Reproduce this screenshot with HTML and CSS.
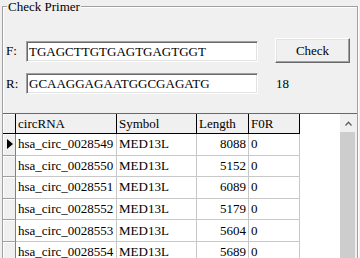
FILE: index.html
```html
<!DOCTYPE html>
<html>
<head>
<meta charset="utf-8">
<link rel="stylesheet" href="styles.css">
</head>
<body>
<fieldset class="group">
  <legend class="group-title">Check Primer</legend>
  <div class="form">
    <div class="row row-f">
      <label class="lbl">F:</label>
      <input class="seq seq-f" value="TGAGCTTGTGAGTGAGTGGT">
      <button class="btn">Check</button>
    </div>
    <div class="row row-r">
      <label class="lbl">R:</label>
      <input class="seq" value="GCAAGGAGAATGGCGAGATG">
      <span class="count">18</span>
    </div>
  </div>
  <div class="grid">
    <div class="grid-body">
      <div class="grow head">
        <div class="ind"></div>
        <div class="c c1">circRNA</div>
        <div class="c c2">Symbol</div>
        <div class="c c3 lft">Length</div>
        <div class="c c4">F0R</div>
      </div>
      <div class="grow">
        <div class="ind"><svg class="cur" width="6" height="10" viewBox="0 0 6 10"><polygon points="0,0 6,5 0,10" fill="#000"/></svg></div>
        <div class="c c1">hsa_circ_0028549</div>
        <div class="c c2">MED13L</div>
        <div class="c c3">8088</div>
        <div class="c c4">0</div>
      </div>
      <div class="grow">
        <div class="ind"></div>
        <div class="c c1">hsa_circ_0028550</div>
        <div class="c c2">MED13L</div>
        <div class="c c3">5152</div>
        <div class="c c4">0</div>
      </div>
      <div class="grow">
        <div class="ind"></div>
        <div class="c c1">hsa_circ_0028551</div>
        <div class="c c2">MED13L</div>
        <div class="c c3">6089</div>
        <div class="c c4">0</div>
      </div>
      <div class="grow">
        <div class="ind"></div>
        <div class="c c1">hsa_circ_0028552</div>
        <div class="c c2">MED13L</div>
        <div class="c c3">5179</div>
        <div class="c c4">0</div>
      </div>
      <div class="grow">
        <div class="ind"></div>
        <div class="c c1">hsa_circ_0028553</div>
        <div class="c c2">MED13L</div>
        <div class="c c3">5604</div>
        <div class="c c4">0</div>
      </div>
      <div class="grow">
        <div class="ind"></div>
        <div class="c c1">hsa_circ_0028554</div>
        <div class="c c2">MED13L</div>
        <div class="c c3">5689</div>
        <div class="c c4">0</div>
      </div>
    </div>
    <div class="vscroll">
      <div class="sb-up"><svg width="7" height="5" viewBox="0 0 7 5"><polyline points="0.5,4.5 3.5,1.2 6.5,4.5" fill="none" stroke="#606060" stroke-width="1.3"/></svg></div>
      <div class="sb-thumb"></div>
    </div>
  </div>
</fieldset>
</body>
</html>
```

FILE: styles.css
```css
html, body {
  margin: 0;
  padding: 0;
}
body {
  width: 360px;
  height: 258px;
  overflow: hidden;
  background: #f0f0f0;
  font-family: "Liberation Serif", Tinos, "Noto Serif", "DejaVu Serif", FreeSerif, "Times New Roman", Times, serif;
  font-size: 13px;
  color: #000;
}
.group {
  margin: 0 0 0 2px;
  padding: 0;
  width: 356px;
  height: 258px;
  min-width: 0;
  box-sizing: border-box;
  border: 1px solid #a0a0a0;
  border-bottom: 0;
  box-shadow: 1px 0 0 #fff, inset 1px 1px 0 #fff;
  overflow: hidden;
}
.group-title {
  margin-left: 4px;
  padding: 0 1px;
  line-height: 13px;
  background: #f0f0f0;
  font: inherit;
  line-height: 13px;
}
.form {
  padding: 25px 0 0 3px;
}
.row {
  display: flex;
  align-items: center;
}
.row-f {
  height: 25px;
}
.row-r {
  height: 21px;
  margin-top: 10px;
}
.lbl {
  width: 20px;
  flex: none;
}
.seq {
  width: 232px;
  height: 21px;
  box-sizing: border-box;
  margin: 0;
  padding: 0 0 0 2px;
  font: inherit;
  color: #000;
  background: #fff;
  border: 1px solid;
  border-color: #a0a0a0 #fff #fff #a0a0a0;
  box-shadow: inset 1px 1px 0 #696969, inset -1px -1px 0 #e3e3e3;
  outline: none;
}
.seq-f {
  margin-top: 2px;
}
.btn {
  margin: 0 0 0 17px;
  width: 75px;
  height: 25px;
  padding: 0;
  box-sizing: border-box;
  font: inherit;
  color: #000;
  background: #f0f0f0;
  border: 1px solid;
  border-color: #fff #696969 #696969 #fff;
  box-shadow: inset -1px -1px 0 #a0a0a0, inset 1px 1px 0 #e3e3e3;
}
.count {
  margin-left: 18px;
}
.grid {
  margin: 19px 0 0 -1px;
  width: 355px;
  height: 145px;
  box-sizing: border-box;
  display: flex;
  border-top: 1px solid #696969;
  border-left: 1px solid #696969;
  background: #fff;
}
.grid-body {
  flex: 1;
  display: flex;
  flex-direction: column;
  overflow: hidden;
}
.grow {
  display: flex;
  height: 21.6px;
  flex: none;
}
.grow.head {
  height: 20px;
}
.ind {
  width: 13px;
  flex: none;
  box-sizing: border-box;
  background: #f0f0f0;
  border-right: 1px solid #808080;
  border-bottom: 1px solid #a0a0a0;
  box-shadow: inset 1px 1px 0 #fff;
  display: flex;
  align-items: center;
  justify-content: center;
}
.cur {
  margin-left: 1px;
}
.c {
  flex: none;
  box-sizing: border-box;
  padding: 0 2px;
  border-right: 1px solid #c8c8c8;
  border-bottom: 1px solid #c8c8c8;
  display: flex;
  align-items: center;
  white-space: nowrap;
  overflow: hidden;
}
.c1 { width: 101px; }
.c2 { width: 80px; }
.c3 { width: 52px; justify-content: flex-end; }
.c4 { width: 51px; }
.head .c {
  background: #f0f0f0;
  border-right-color: #000;
  border-bottom-color: #000;
}
.head .ind {
  border-right-color: #000;
  border-bottom-color: #000;
}
.head .c3.lft {
  justify-content: flex-start;
}
.vscroll {
  width: 17px;
  flex: none;
  background: #f0f0f0;
  display: flex;
  flex-direction: column;
}
.sb-up {
  height: 18px;
  display: flex;
  align-items: center;
  justify-content: center;
  padding-right: 1px;
}
.sb-thumb {
  width: 15px;
  flex: 1;
  background: #cdcdcd;
}
```
